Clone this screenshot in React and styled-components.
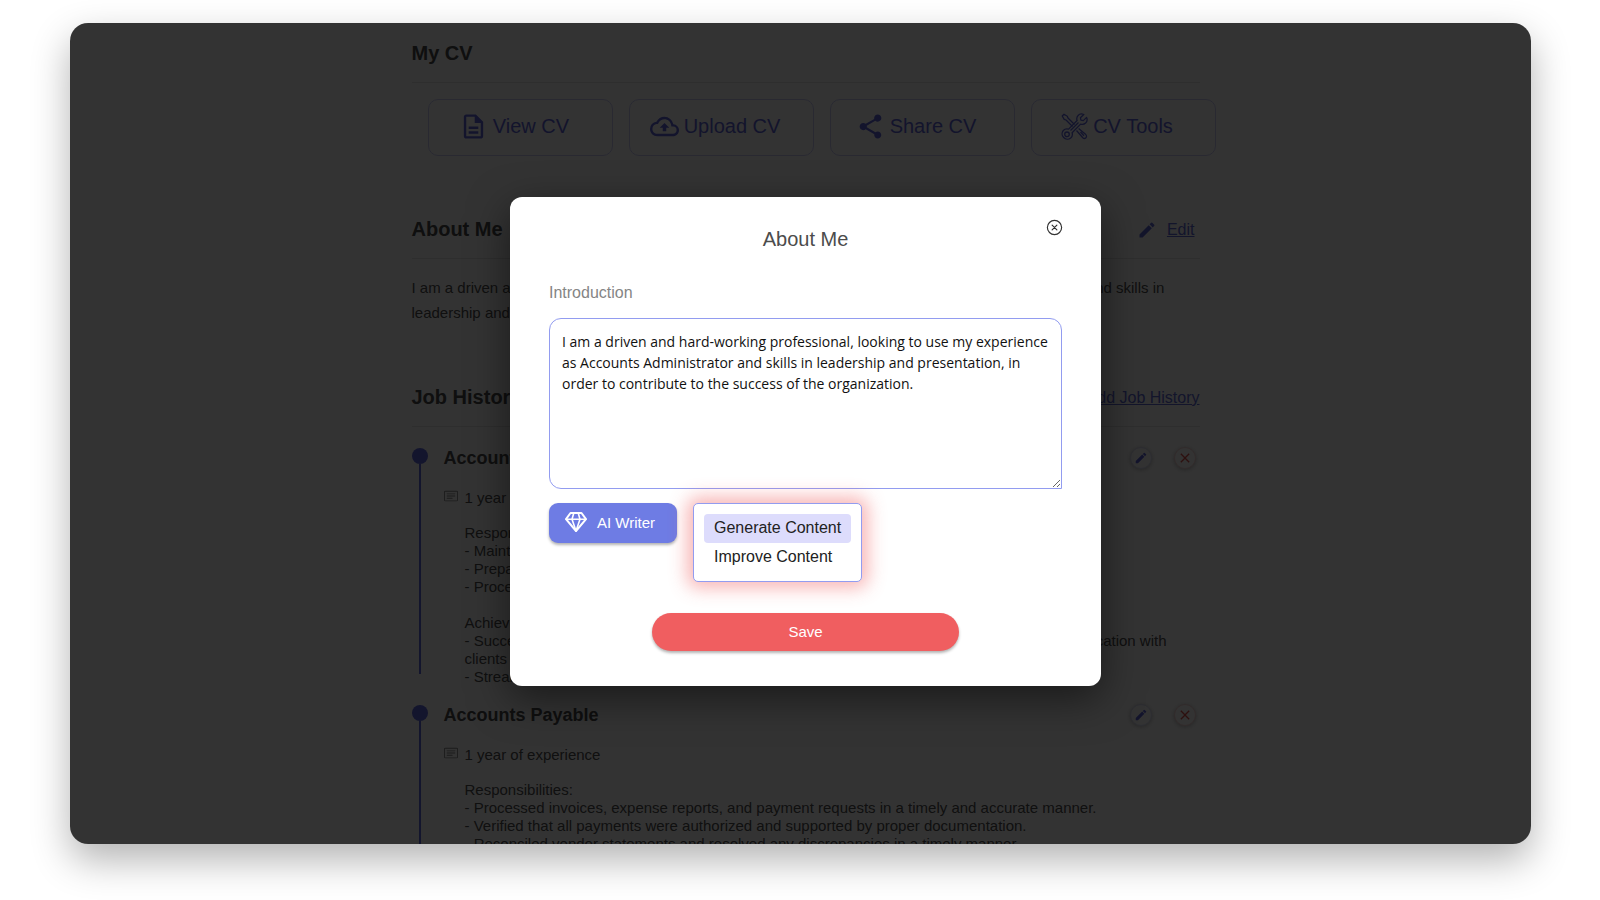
import React from 'react';
import styled, { createGlobalStyle } from 'styled-components';
import {
  MdOutlineDescription,
  MdOutlineCloudUpload,
  MdShare,
  MdEdit,
  MdClose,
} from 'react-icons/md';
import { BsCardText } from 'react-icons/bs';
import { IoCloseCircleOutline } from 'react-icons/io5';

const GlobalStyle = createGlobalStyle`
  * {
    box-sizing: border-box;
  }
  body {
    margin: 0;
    background: #fff;
    font-family: 'Liberation Sans', Arial, sans-serif;
    font-size: 15px;
    color: #4f4f4f;
  }
  h1, h2, h3, p {
    margin: 0;
  }
  button, textarea {
    font-family: inherit;
  }
`;

const Page = styled.div`
  height: 100vh;
  padding: 23px 69px 56px 70px;
`;

const Frame = styled.div`
  position: relative;
  height: 100%;
  padding-left: 10px;
  border-radius: 18px;
  overflow: hidden;
  background: #fff;
  box-shadow: 0 16px 38px rgba(0, 0, 0, 0.3);
`;

const Content = styled.main`
  max-width: 788px;
  margin: 0 auto;
`;

const Heading = styled.header`
  display: flex;
  justify-content: space-between;
  align-items: center;
  height: 60px;
  padding-top: 2px;
  border-bottom: 1px solid #e4e4e4;
  h2 {
    font-size: 20px;
    color: #4a4a4a;
  }
`;

const HeadLink = styled.a`
  display: flex;
  align-items: center;
  gap: 10px;
  padding-right: ${(props) => (props.$inset ? '5px' : '0')};
  font-size: 16px;
  color: #6269d8;
  text-decoration: none;
  span {
    text-decoration: underline;
  }
`;

const Tools = styled.div`
  display: grid;
  grid-template-columns: repeat(4, 1fr);
  gap: 16px;
  margin: 16px -16px 43px 16px;
`;

const ToolButton = styled.button`
  display: flex;
  align-items: center;
  justify-content: center;
  gap: 5px;
  height: 57px;
  padding: 0 12px 2px 0;
  border: 1px solid #cbccf6;
  border-radius: 10px;
  background: transparent;
  font-size: 20px;
  color: #5f66dc;
`;

const About = styled.p`
  padding: 16px 0 42px;
  line-height: 25px;
`;

const Jobs = styled.div`
  display: flex;
  flex-direction: column;
  gap: 19px;
  padding-top: 21px;
`;

const Job = styled.article`
  display: grid;
  grid-template-columns: 16px 1fr;
  column-gap: 16px;
`;

const Timeline = styled.div`
  display: flex;
  flex-direction: column;
  align-items: center;
  padding-bottom: 12px;
  &::before {
    content: '';
    width: 16px;
    height: 16px;
    border-radius: 50%;
    background: #6068e0;
  }
  &::after {
    content: '';
    flex: 1;
    width: 2px;
    background: #6068e0;
  }
`;

const JobHead = styled.div`
  display: flex;
  align-items: center;
  height: 20px;
  gap: 22px;
  padding-right: 4px;
  h3 {
    flex: 1;
    font-size: 18px;
    color: #4a4a4a;
  }
`;

const RoundButton = styled.button`
  display: grid;
  place-items: center;
  width: 22px;
  height: 22px;
  padding: 0;
  border: 1px solid ${(props) => (props.$danger ? '#f7d4d4' : '#dddef6')};
  border-radius: 50%;
  background: #fff;
  box-shadow: 0 1px 4px rgba(0, 0, 0, 0.25);
  color: ${(props) => (props.$danger ? '#e0504c' : '#5f66dc')};
`;

const Experience = styled.div`
  display: flex;
  gap: 7px;
  margin: 21px 0 17px;
  line-height: 18px;
  svg {
    color: #8a8a8a;
  }
`;

const Details = styled.div`
  padding-left: 21px;
  line-height: 18px;
  white-space: pre-line;
`;

const Backdrop = styled.div`
  position: absolute;
  inset: 0;
  display: flex;
  justify-content: center;
  align-items: center;
  padding-left: 10px;
  background: rgba(0, 0, 0, 0.8);
`;

const Modal = styled.form`
  width: 100%;
  max-width: 591px;
  margin-bottom: -16px;
  padding: 21px 39px 35px;
  border-radius: 12px;
  background: #fff;
  box-shadow: 0 12px 40px rgba(0, 0, 0, 0.5);
`;

const ModalHead = styled.div`
  display: grid;
  grid-template-columns: 20px 1fr 20px;
  h2 {
    grid-column: 2;
    padding-top: 9px;
    text-align: center;
    font-size: 20px;
    font-weight: 400;
    line-height: 24px;
    color: #4c4c4c;
  }
`;

const CloseButton = styled.button`
  display: grid;
  justify-self: end;
  align-self: start;
  margin-right: -2px;
  padding: 0;
  border: 0;
  background: none;
  color: #333;
`;

const Label = styled.label`
  display: block;
  margin: 32px 0 15px;
  font-size: 16px;
  line-height: 20px;
  color: #858585;
`;

const Textarea = styled.textarea`
  display: block;
  width: 100%;
  height: 171px;
  padding: 12px;
  border: 1px solid #929cf0;
  border-radius: 12px 12px 0 12px;
  outline: 0;
  font-family: 'Open Sans', 'Noto Sans', sans-serif;
  font-size: 14px;
  line-height: 21px;
  color: #111;
`;

const Writer = styled.div`
  display: flex;
  align-items: flex-start;
  gap: 16px;
  margin: 14px 0 31px;
`;

const WriterButton = styled.button`
  display: flex;
  align-items: center;
  justify-content: center;
  gap: 10px;
  width: 128px;
  height: 40px;
  padding: 0 6px 2px 0;
  border: 0;
  border-radius: 9px;
  background: #6e7ce4;
  box-shadow: 0 2px 3px rgba(0, 0, 0, 0.3);
  font-size: 15px;
  color: #fff;
`;

const Menu = styled.div`
  width: 169px;
  height: 79px;
  padding: 10px;
  border: 1px solid #929cf0;
  border-radius: 5px;
  background: #fff;
  box-shadow: 0 0 18px 6px rgba(240, 94, 94, 0.45);
`;

const MenuItem = styled.button`
  display: block;
  width: 100%;
  height: 29px;
  padding: 0 10px 2px;
  border: 0;
  border-radius: 4px;
  background: ${(props) => (props.$active ? '#dddcfc' : 'transparent')};
  text-align: left;
  white-space: nowrap;
  font-size: 16px;
  color: #222;
`;

const SaveButton = styled.button`
  display: block;
  width: 60%;
  height: 38px;
  margin: 0 auto;
  padding: 0 0 2px;
  border: 0;
  border-radius: 19px;
  background: #f05e60;
  box-shadow: 0 2px 3px rgba(0, 0, 0, 0.3);
  font-size: 15px;
  color: #fff;
`;

const ToolsIcon = () => (
  <svg
    width="27"
    height="27"
    viewBox="0 0 27 27"
    fill="none"
    stroke="currentColor"
    strokeWidth="1.3"
    strokeLinejoin="round"
  >
    <path d="M11.5 13.5 5 7 3.2 6.3 1.2 3 3 1.2l3.3 2L7 5l6.5 6.5" />
    <path d="m15.5 17.5 6.3 7.2c1 1 2.3.8 3.1 0s.9-2.1-.1-3.1l-7.2-6.2M19.5 19l3.5 3.8" />
    <path d="M22.8 1.5c-2-.9-4.400-.5-5.700 1-1.300 1.400-1.600 3.300-1 5L7.600 16.100c-2-.6-4-.1-5.300 1.400a5.300 5.300 0 0 0 7.400 7.500c1.500-1.300 2-3.400 1.400-5.300l8.500-8.600c1.700.6 3.700.2 5-1 1.500-1.500 1.900-3.700 1-5.700l-3.300 3.200-2.400-.5-.5-2.400z" />
    <circle cx="6" cy="21.3" r="2.3" />
    <path d="m9.5 17.5 8-8" />
  </svg>
);

const DiamondIcon = () => (
  <svg
    width="22"
    height="20"
    viewBox="0 0 22 20"
    fill="none"
    stroke="currentColor"
    strokeWidth="2"
    strokeLinejoin="round"
  >
    <path d="M5.5 1h11L21 7.2 11 19 1 7.2z" />
    <path d="M1 7.2h20M8.8 1 7 7.2 11 19l4-11.8L13.2 1" strokeWidth="1.6" />
  </svg>
);

const INTRO =
  'I am a driven and hard-working professional, looking to use my experience as Accounts Administrator and skills in leadership and presentation, in order to contribute to the success of the organization.';

const jobs = [
  {
    title: 'Accounts Administrator',
    details: `Responsibilities:
- Maintained accurate financial records and ledgers.
- Prepared monthly reports and account statements.
- Processed invoices and payments.

Achievements:
- Successfully reduced the number of overdue accounts by improving their process of communication with clients
- Streamlined the invoicing process.`,
  },
  {
    title: 'Accounts Payable',
    details: `Responsibilities:
- Processed invoices, expense reports, and payment requests in a timely and accurate manner.
- Verified that all payments were authorized and supported by proper documentation.
- Reconciled vendor statements and resolved any discrepancies in a timely manner.
- Prepared weekly payment runs.`,
  },
];

const App = () => (
  <Page>
    <GlobalStyle />
    <Frame>
      <Content>
        <Heading>
          <h2>My CV</h2>
        </Heading>
        <Tools>
          <ToolButton type="button">
            <MdOutlineDescription size={29} />
            View CV
          </ToolButton>
          <ToolButton type="button">
            <MdOutlineCloudUpload size={29} />
            Upload CV
          </ToolButton>
          <ToolButton type="button">
            <MdShare size={29} />
            Share CV
          </ToolButton>
          <ToolButton type="button">
            <ToolsIcon />
            CV Tools
          </ToolButton>
        </Tools>
        <Heading>
          <h2>About Me</h2>
          <HeadLink href="#" $inset>
            <MdEdit size={20} />
            <span>Edit</span>
          </HeadLink>
        </Heading>
        <About>{INTRO}</About>
        <Heading>
          <h2>Job History</h2>
          <HeadLink href="#">
            <span>Add Job History</span>
          </HeadLink>
        </Heading>
        <Jobs>
          {jobs.map((job) => (
            <Job key={job.title}>
              <Timeline />
              <div>
                <JobHead>
                  <h3>{job.title}</h3>
                  <RoundButton type="button" aria-label="Edit job">
                    <MdEdit size={14} />
                  </RoundButton>
                  <RoundButton type="button" aria-label="Remove job" $danger>
                    <MdClose size={16} />
                  </RoundButton>
                </JobHead>
                <Experience>
                  <BsCardText size={14} />
                  1 year of experience
                </Experience>
                <Details>{job.details}</Details>
              </div>
            </Job>
          ))}
        </Jobs>
      </Content>
      <Backdrop>
        <Modal>
          <ModalHead>
            <h2>About Me</h2>
            <CloseButton type="button" aria-label="Close">
              <IoCloseCircleOutline size={19} />
            </CloseButton>
          </ModalHead>
          <Label htmlFor="introduction">Introduction</Label>
          <Textarea id="introduction" defaultValue={INTRO} />
          <Writer>
            <WriterButton type="button">
              <DiamondIcon />
              AI Writer
            </WriterButton>
            <Menu>
              <MenuItem type="button" $active>
                Generate Content
              </MenuItem>
              <MenuItem type="button">Improve Content</MenuItem>
            </Menu>
          </Writer>
          <SaveButton type="submit">Save</SaveButton>
        </Modal>
      </Backdrop>
    </Frame>
  </Page>
);
export default App;
